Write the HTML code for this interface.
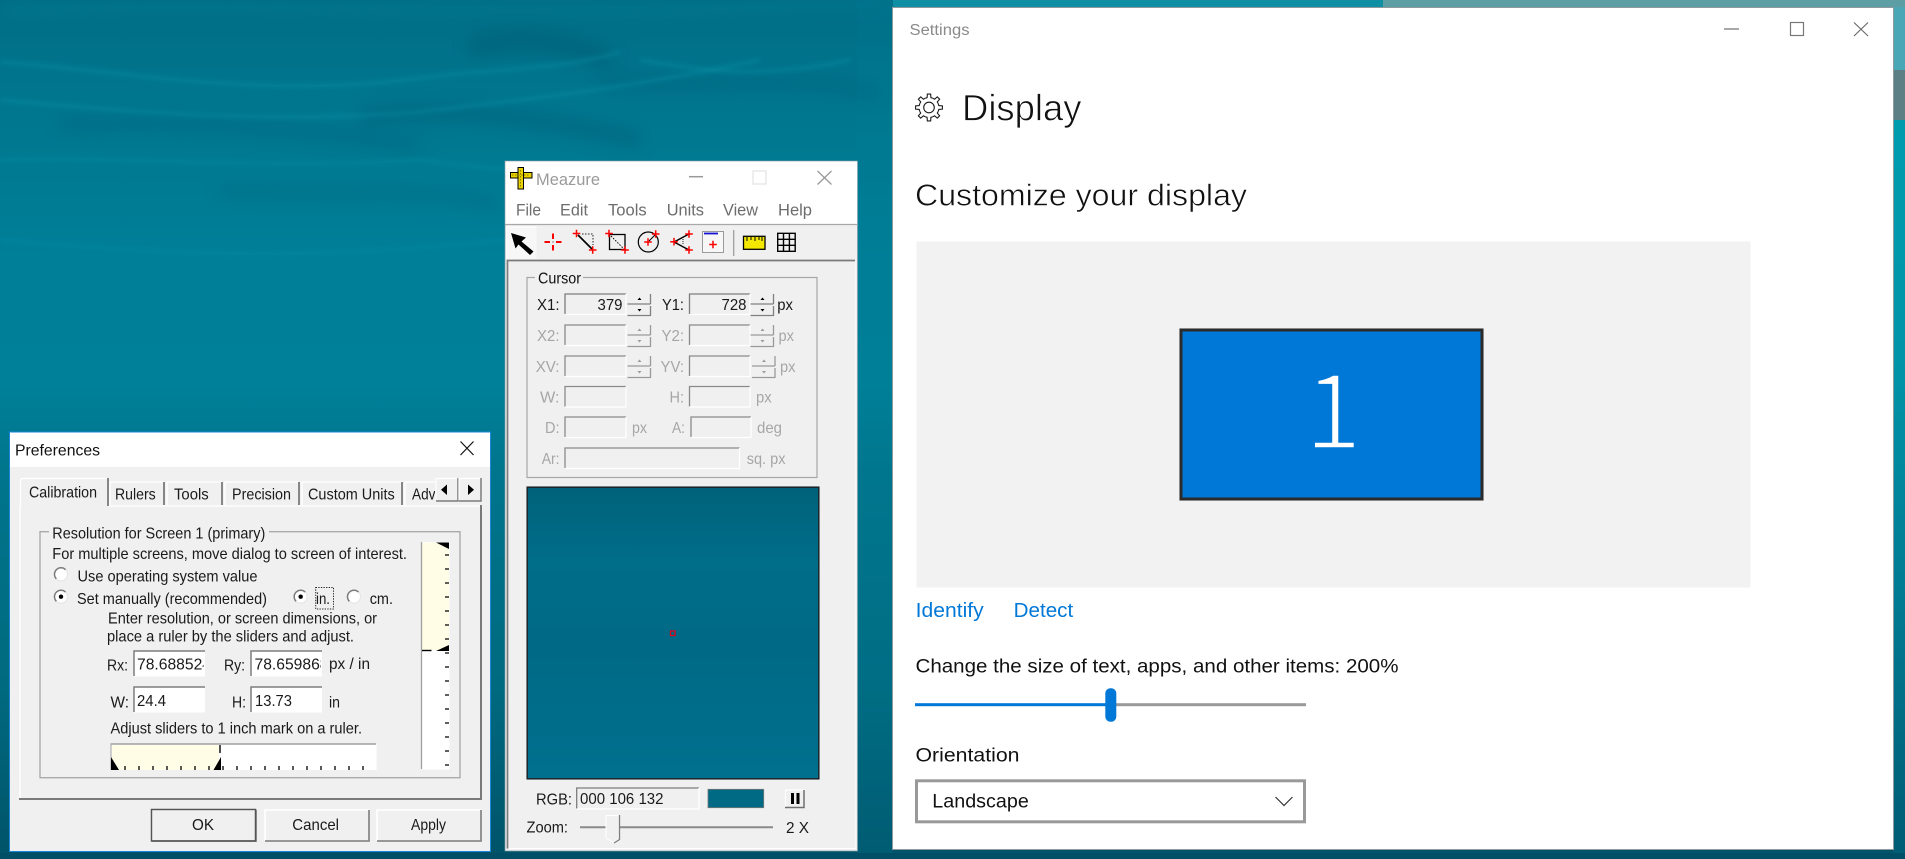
<!DOCTYPE html>
<html><head><meta charset="utf-8"><title>Display</title>
<style>
html,body{margin:0;padding:0;width:1905px;height:859px;overflow:hidden;background:#007a92}
svg{display:block;position:absolute;left:0;top:0}
text{font-family:"Liberation Sans",sans-serif;white-space:pre}
.d text{font-size:16px;fill:#1a1a1a}
.g text{font-size:16px;fill:#a6a6a6}
.m text{font-size:16.500px;fill:#6d6d6d}
.win{filter:blur(.35px)}
.set{filter:blur(.25px)}
</style></head><body>
<svg width="1905" height="859" viewBox="0 0 1905 859" xmlns="http://www.w3.org/2000/svg">
<defs>
<linearGradient id="bg" x1="0" y1="0" x2="0" y2="1">
<stop offset="0" stop-color="#006d85"/><stop offset=".1" stop-color="#00758d"/><stop offset=".3" stop-color="#007f98"/><stop offset=".45" stop-color="#008099"/><stop offset=".55" stop-color="#00758c"/><stop offset=".8" stop-color="#006a80"/><stop offset="1" stop-color="#005369"/>
</linearGradient>
<linearGradient id="rs" x1="0" y1="0" x2="0" y2="1">
<stop offset="0" stop-color="#00a0b2"/><stop offset=".42" stop-color="#0094a8"/><stop offset=".7" stop-color="#007a92"/><stop offset="1" stop-color="#005c74"/>
</linearGradient>
<linearGradient id="prev" x1="0" y1="0" x2="0" y2="1">
<stop offset="0" stop-color="#00627a"/><stop offset=".25" stop-color="#006d89"/><stop offset=".55" stop-color="#006a86"/><stop offset="1" stop-color="#00708e"/>
</linearGradient>
<filter id="b6" filterUnits="userSpaceOnUse" x="0" y="0" width="1905" height="859"><feGaussianBlur stdDeviation="8"/></filter>
<filter id="b2" filterUnits="userSpaceOnUse" x="0" y="0" width="1905" height="859"><feGaussianBlur stdDeviation="2.500"/></filter>
<clipPath id="c1"><rect x="135" y="652" width="68.500" height="24"/></clipPath>
<clipPath id="c2"><rect x="252" y="652" width="69" height="24"/></clipPath>
<g id="p"><path d="M-3.800 0H3.800M0-3.800V3.800" stroke="#f00" stroke-width="1.500" fill="none"/></g>
<g id="spin"><rect x="0" y="0" width="23" height="11" fill="#f0f0f0"/><rect x="0" y="12" width="23" height="11" fill="#f0f0f0"/>
<path d="M0 11H23M23 1V11M0 22.500H23M23 13V23" stroke="#808080" stroke-width="1.300" fill="none"/>
<path d="M10 7L12 4.500L14 7zM10 16L12 18.500L14 16z" fill="#000"/></g>
<g id="spinG"><rect x="0" y="0" width="23" height="11" fill="#f0f0f0"/><rect x="0" y="12" width="23" height="11" fill="#f0f0f0"/>
<path d="M0 11H23M23 1V11M0 22.500H23M23 13V23" stroke="#9a9a9a" stroke-width="1.300" fill="none"/>
<path d="M10 7L12 4.500L14 7zM10 16L12 18.500L14 16z" fill="#9a9a9a"/></g>
<g id="radio"><circle r="6.500" fill="#fff"/><path d="M-4.600 4.600A6.500 6.500 0 0 1 4.600-4.600" stroke="#7a7a7a" stroke-width="1.500" fill="none"/><path d="M4.600-4.600A6.500 6.500 0 0 1-4.600 4.600" stroke="#e6e6e6" stroke-width="1.200" fill="none"/></g>
<path id="tooth" d="M-3.830-9.240L-1.910-9.820L-1.650-13.400H1.650L1.910-9.820L3.830-9.240" fill="none" stroke="#1a1a1a" stroke-width="1.100"/>
<g id="btn"><rect width="104" height="31" fill="#f0f0f0"/><path d="M0 31V0H104" stroke="#fff" stroke-width="1.500" fill="none"/><path d="M104 0V31H0" stroke="#8a8a8a" stroke-width="1.800" fill="none"/></g>
</defs>

<!-- wallpaper -->
<rect width="1905" height="859" fill="url(#bg)"/>
<g fill="none">
<path d="M470 48C520 34 570 42 610 60" stroke="#005f76" stroke-width="20" filter="url(#b6)" opacity=".6"/>
<path d="M360 118C450 104 560 122 640 140" stroke="#005f76" stroke-width="16" filter="url(#b6)" opacity=".5"/>
<path d="M60 125C200 118 300 130 420 145" stroke="#00617a" stroke-width="12" filter="url(#b6)" opacity=".45"/>
<path d="M220 190C330 198 430 186 500 205" stroke="#00617a" stroke-width="10" filter="url(#b6)" opacity=".4"/>
<path d="M600 80C700 90 800 70 880 95" stroke="#00617a" stroke-width="16" filter="url(#b6)" opacity=".4"/>
<path d="M0 62C120 70 260 100 420 78C500 68 560 70 620 52" stroke="#0a9fb4" stroke-width="4" filter="url(#b2)" opacity=".3"/>
<path d="M0 100C120 110 260 125 420 112C520 100 620 90 760 60" stroke="#0a9fb4" stroke-width="4" filter="url(#b2)" opacity=".3"/>
<path d="M0 160C100 155 280 170 420 160C500 170 600 180 700 170" stroke="#0a9fb4" stroke-width="4" filter="url(#b2)" opacity=".25"/>
<path d="M640 60C700 70 760 80 850 60" stroke="#0a9fb4" stroke-width="4" filter="url(#b2)" opacity=".3"/>
<path d="M0 240C120 250 280 265 505 240" stroke="#0a9fb4" stroke-width="4" filter="url(#b2)" opacity=".18"/>
<path d="M0 10C300 0 500 20 893 2" stroke="#0a93a8" stroke-width="8" filter="url(#b6)" opacity=".3"/>
</g>
<rect x="857" y="0" width="36" height="859" fill="#007f96" opacity=".2"/>
<rect x="1893" y="0" width="12" height="859" fill="url(#rs)"/>
<rect x="1893" y="0" width="12" height="70" fill="#4aa8b6"/>
<rect x="1893" y="70" width="12" height="50" fill="#5c7f86"/>
<rect x="893" y="0" width="490" height="7" fill="#0f8fa3"/>
<rect x="1383" y="0" width="522" height="7" fill="#5d9ea5"/>
<rect x="0" y="853" width="1905" height="6" fill="#004f66"/>

<!-- SETTINGS -->
<g class="set">
<rect x="892.500" y="7.500" width="1001" height="842" fill="#fff" stroke="#8d9a9e" stroke-width="1"/>
<text x="909.500" y="35" font-size="15.500" fill="#8a8a8a" textLength="60" lengthAdjust="spacingAndGlyphs">Settings</text>
<path d="M1724 29H1739" stroke="#8a8a8a" stroke-width="1.500"/>
<rect x="1790.500" y="22.500" width="13" height="13" fill="none" stroke="#777" stroke-width="1.200"/>
<path d="M1854 22.500L1868 36M1868 22.500L1854 36" stroke="#666" stroke-width="1.100"/>
<g transform="translate(929 107.500)">
<use href="#tooth"/><use href="#tooth" transform="rotate(45)"/><use href="#tooth" transform="rotate(90)"/><use href="#tooth" transform="rotate(135)"/><use href="#tooth" transform="rotate(180)"/><use href="#tooth" transform="rotate(225)"/><use href="#tooth" transform="rotate(270)"/><use href="#tooth" transform="rotate(315)"/>
<circle r="5.300" fill="none" stroke="#1a1a1a" stroke-width="1.100"/>
</g>
<text x="962" y="120.500" font-size="37" fill="#111" stroke="#fff" stroke-width=".7" textLength="119.500" lengthAdjust="spacingAndGlyphs">Display</text>
<text x="915" y="205.700" font-size="31" fill="#111" stroke="#fff" stroke-width=".55" textLength="332" lengthAdjust="spacingAndGlyphs">Customize your display</text>
<rect x="916.500" y="241.500" width="834" height="346" fill="#f2f2f2"/>
<rect x="1179" y="328" width="305" height="173" fill="#e6e6e6"/>
<rect x="1181" y="330" width="301" height="169" fill="#0078d7" stroke="#2b2b2b" stroke-width="3"/>
<text x="1304" y="449" font-size="105" fill="#fff" stroke="#0078d7" stroke-width="3.500" style="font-family:'Noto Sans CJK JP','Liberation Sans',sans-serif">1</text>
<text x="915.700" y="617" font-size="20" fill="#0078d7" textLength="68" lengthAdjust="spacingAndGlyphs">Identify</text>
<text x="1013.700" y="617" font-size="20" fill="#0078d7" textLength="59.500" lengthAdjust="spacingAndGlyphs">Detect</text>
<text x="915.500" y="672.700" font-size="19.500" fill="#111" textLength="483" lengthAdjust="spacingAndGlyphs">Change the size of text, apps, and other items: 200%</text>
<rect x="1110" y="703.200" width="196" height="3" fill="#999"/>
<rect x="915" y="703.200" width="195" height="3" fill="#0078d7"/>
<rect x="1105.300" y="688.300" width="11" height="33.400" rx="5" fill="#0078d7"/>
<text x="915.500" y="761.700" font-size="19.500" fill="#111" textLength="104" lengthAdjust="spacingAndGlyphs">Orientation</text>
<rect x="916.500" y="780.800" width="388" height="41" fill="#fff" stroke="#999" stroke-width="3"/>
<text x="932.300" y="807.700" font-size="19.500" fill="#111" textLength="96.500" lengthAdjust="spacingAndGlyphs">Landscape</text>
<path d="M1275.500 797L1284 805.500L1292.500 797" fill="none" stroke="#333" stroke-width="1.200"/>
</g>

<g class="win">
<!-- MEAZURE -->
<rect x="505" y="161" width="352.500" height="690" fill="#f0f0f0" stroke="#7f9aa3" stroke-width=".7"/>
<rect x="505.400" y="161.400" width="351.700" height="62.600" fill="#fff"/>
<path d="M505 224.500H857" stroke="#a8a8a8" stroke-width="1.200"/>
<!-- app icon -->
<g stroke="#000" stroke-width="1" fill="#e8d200">
<rect x="510.500" y="172.500" width="21.500" height="5.500"/>
<rect x="518" y="167.500" width="5.500" height="21.500"/>
</g>
<path d="M512 175H530M520.500 170V187" stroke="#8a7a00" stroke-width="1" stroke-dasharray="1.500 1.500"/>
<text x="536" y="185" font-size="16.500" fill="#9a9a9a" textLength="64" lengthAdjust="spacingAndGlyphs">Meazure</text>
<path d="M689 176.700H703" stroke="#999" stroke-width="1.500"/>
<rect x="753" y="171" width="13" height="13" fill="none" stroke="#e4e4e4" stroke-width="1.300"/>
<path d="M817.500 171L831.500 184.500M831.500 171L817.500 184.500" stroke="#9a9a9a" stroke-width="1.300"/>
<g class="m">
<text x="516" y="215.700" textLength="25" lengthAdjust="spacingAndGlyphs">File</text>
<text x="560" y="215.700" textLength="28" lengthAdjust="spacingAndGlyphs">Edit</text>
<text x="608" y="215.700" textLength="38.700" lengthAdjust="spacingAndGlyphs">Tools</text>
<text x="666.700" y="215.700" textLength="37.300" lengthAdjust="spacingAndGlyphs">Units</text>
<text x="723" y="215.700" textLength="35" lengthAdjust="spacingAndGlyphs">View</text>
<text x="778" y="215.700" textLength="34" lengthAdjust="spacingAndGlyphs">Help</text>
</g>
<!-- toolbar -->
<rect x="506.500" y="227" width="30" height="32" fill="#f7f7f7"/>
<path d="M506.500 259V227H536.500" stroke="#fff" fill="none"/>
<path d="M511 233L526 237.500L521.500 241.500L533.500 251.500L530 255L518.500 244.500L515.500 248.500z" fill="#000"/>
<path d="M544.500 242H550M556 242H561.500M553 233.500V239M553 245V250.500" stroke="#f00" stroke-width="2" fill="none"/>
<path d="M552 241h2v2h-2z" fill="#bbb"/>
<path d="M578 235L592 249" stroke="#000" stroke-width="1.700"/>
<path d="M582 234H593V245" stroke="#222" stroke-width="1" stroke-dasharray="1.500 1.500" fill="none"/>
<use href="#p" x="576.500" y="233.500"/><use href="#p" x="592.700" y="250"/>
<rect x="609.500" y="234.500" width="15.500" height="15" fill="none" stroke="#000" stroke-width="1.300"/>
<path d="M611 236L624 249" stroke="#000" stroke-width="1" stroke-dasharray="1.500 1.500"/>
<use href="#p" x="609" y="233.500"/><use href="#p" x="625" y="250"/>
<circle cx="648.300" cy="242" r="10" fill="none" stroke="#000" stroke-width="1.200"/>
<path d="M649 241L655 235" stroke="#000" stroke-width="1"/>
<use href="#p" x="648" y="242"/><use href="#p" x="655.700" y="234"/>
<path d="M689 234L674 242L689 250" fill="none" stroke="#000" stroke-width="1.400"/>
<path d="M683 239V245" stroke="#222" stroke-width="1" stroke-dasharray="1 1"/>
<use href="#p" x="674" y="241.700"/><use href="#p" x="689" y="234"/><use href="#p" x="689" y="250"/>
<rect x="702.500" y="231.500" width="21" height="21" fill="#f7f7f7" stroke="#9a9a9a" stroke-width="1"/>
<path d="M704 233.500H718" stroke="#1414d0" stroke-width="1.800"/>
<use href="#p" x="713" y="244.500"/>
<path d="M733.700 230V256" stroke="#999" stroke-width="1.200"/>
<rect x="743.500" y="236.300" width="21.500" height="13" fill="#f5e800" stroke="#000" stroke-width="1.300"/>
<path d="M747 237V241M751 237V240M755 237V241M759 237V240M762 237V241" stroke="#000" stroke-width="1"/>
<path d="M777.700 233.300H795.200V251.300H777.700zM783.500 233.300V251.300M789.400 233.300V251.300M777.700 239.300H795.200M777.700 245.300H795.200" fill="none" stroke="#000" stroke-width="1.400"/>
<!-- panel -->
<path d="M507.500 848.500V260.500H855" fill="none" stroke="#7b7b7b" stroke-width="1.700"/>
<path d="M509 848.500H855V262" fill="none" stroke="#fff" stroke-width="1"/>
<rect x="509" y="262" width="346" height="586" fill="#f0f0f0"/>
<!-- cursor group -->
<rect x="527" y="277.500" width="290" height="200" fill="none" stroke="#a6a6a6" stroke-width="1.200"/>
<rect x="535" y="270" width="48" height="14" fill="#f0f0f0"/>
<text x="538" y="283.500" font-size="16" fill="#111" textLength="43" lengthAdjust="spacingAndGlyphs">Cursor</text>
<g fill="#f0f0f0" stroke="none">
<path d="M565 314V294H626" fill="none" stroke="#7d7d7d" stroke-width="1.300"/><path d="M626 294V314.500H565" fill="none" stroke="#fff" stroke-width="1.200"/>
<path d="M689.500 314V294H750" fill="none" stroke="#7d7d7d" stroke-width="1.300"/><path d="M750 294V314.500H689.500" fill="none" stroke="#fff" stroke-width="1.200"/>
<path d="M565 345V325H626" fill="none" stroke="#8a8a8a" stroke-width="1.300"/><path d="M626 325V345.500H565" fill="none" stroke="#fff" stroke-width="1.200"/>
<path d="M689.500 345V325H750" fill="none" stroke="#8a8a8a" stroke-width="1.300"/><path d="M750 325V345.500H689.500" fill="none" stroke="#fff" stroke-width="1.200"/>
<path d="M565 376V356H626" fill="none" stroke="#8a8a8a" stroke-width="1.300"/><path d="M626 356V376.500H565" fill="none" stroke="#fff" stroke-width="1.200"/>
<path d="M689.500 376V356H750" fill="none" stroke="#8a8a8a" stroke-width="1.300"/><path d="M750 356V376.500H689.500" fill="none" stroke="#fff" stroke-width="1.200"/>
<path d="M565 406.500V386.500H626" fill="none" stroke="#8a8a8a" stroke-width="1.300"/><path d="M626 386.500V407H565" fill="none" stroke="#fff" stroke-width="1.200"/>
<path d="M689.500 406.500V386.500H750" fill="none" stroke="#8a8a8a" stroke-width="1.300"/><path d="M750 386.500V407H689.500" fill="none" stroke="#fff" stroke-width="1.200"/>
<path d="M565 437V417H626" fill="none" stroke="#8a8a8a" stroke-width="1.300"/><path d="M626 417V437.500H565" fill="none" stroke="#fff" stroke-width="1.200"/>
<path d="M691 437V417H751" fill="none" stroke="#8a8a8a" stroke-width="1.300"/><path d="M751 417V437.500H691" fill="none" stroke="#fff" stroke-width="1.200"/>
<path d="M565 468V448H739.500" fill="none" stroke="#8a8a8a" stroke-width="1.300"/><path d="M739.500 448V468.500H565" fill="none" stroke="#fff" stroke-width="1.200"/>
</g>
<use href="#spin" x="627.500" y="293"/><use href="#spin" x="750.500" y="293"/>
<use href="#spinG" x="627.500" y="324"/><use href="#spinG" x="750.500" y="324"/>
<use href="#spinG" x="627.500" y="355"/><use href="#spinG" x="752" y="355"/>
<g class="d">
<text x="537" y="310" textLength="22.500" lengthAdjust="spacingAndGlyphs">X1:</text>
<text x="597.500" y="310" textLength="25" lengthAdjust="spacingAndGlyphs">379</text>
<text x="662" y="310" textLength="22" lengthAdjust="spacingAndGlyphs">Y1:</text>
<text x="721.500" y="310" textLength="25" lengthAdjust="spacingAndGlyphs">728</text>
<text x="777.300" y="310" textLength="15.700" lengthAdjust="spacingAndGlyphs">px</text>
</g>
<g class="g">
<text x="537" y="341" textLength="22.500" lengthAdjust="spacingAndGlyphs">X2:</text>
<text x="661.500" y="341" textLength="22.500" lengthAdjust="spacingAndGlyphs">Y2:</text>
<text x="778.500" y="341" textLength="15.500" lengthAdjust="spacingAndGlyphs">px</text>
<text x="535.700" y="372" textLength="23.800" lengthAdjust="spacingAndGlyphs">XV:</text>
<text x="660.500" y="372" textLength="23.500" lengthAdjust="spacingAndGlyphs">YV:</text>
<text x="780" y="372" textLength="15.500" lengthAdjust="spacingAndGlyphs">px</text>
<text x="540" y="402.500" textLength="19.500" lengthAdjust="spacingAndGlyphs">W:</text>
<text x="669.500" y="402.500" textLength="14.500" lengthAdjust="spacingAndGlyphs">H:</text>
<text x="756" y="402.500" textLength="15.700" lengthAdjust="spacingAndGlyphs">px</text>
<text x="545" y="433" textLength="14.500" lengthAdjust="spacingAndGlyphs">D:</text>
<text x="632" y="433" textLength="15" lengthAdjust="spacingAndGlyphs">px</text>
<text x="672" y="433" textLength="13" lengthAdjust="spacingAndGlyphs">A:</text>
<text x="757" y="433" textLength="25" lengthAdjust="spacingAndGlyphs">deg</text>
<text x="541.700" y="464" textLength="17.800" lengthAdjust="spacingAndGlyphs">Ar:</text>
<text x="746.700" y="464" textLength="38.800" lengthAdjust="spacingAndGlyphs">sq. px</text>
</g>
<!-- preview -->
<rect x="527.200" y="487.200" width="291.600" height="291.600" fill="url(#prev)" stroke="#1c2428" stroke-width="1.500"/>
<rect x="670.500" y="631" width="4.500" height="4.500" fill="#006a84" stroke="#e0001c" stroke-width="1.300"/>
<g class="d">
<text x="536" y="804.300" textLength="36" lengthAdjust="spacingAndGlyphs">RGB:</text>
<text x="580" y="804" textLength="83.500" lengthAdjust="spacingAndGlyphs">000 106 132</text>
<text x="526.500" y="832.700" textLength="41.500" lengthAdjust="spacingAndGlyphs">Zoom:</text>
<text x="786" y="833" textLength="23" lengthAdjust="spacingAndGlyphs">2 X</text>
</g>
<path d="M576.700 808.500V788H699" fill="none" stroke="#7d7d7d" stroke-width="1.300"/>
<path d="M699 788V809H576.700" fill="none" stroke="#fff" stroke-width="1.300"/>
<rect x="708" y="789.300" width="55.700" height="18.400" fill="#006a84" stroke="#777" stroke-width=".8"/>
<path d="M785.500 807V790H804" fill="none" stroke="#fff" stroke-width="1.200"/>
<path d="M804 790V807.500H785" fill="none" stroke="#707070" stroke-width="1.500"/>
<rect x="791" y="793" width="3" height="11" fill="#000"/><rect x="796.500" y="793" width="3" height="11" fill="#000"/>
<path d="M580 827.300H773" stroke="#8a8a8a" stroke-width="2"/>
<path d="M606 815.500H619V839L613.500 842.500L606 838z" fill="#f0f0f0" stroke="#fff" stroke-width="1"/>
<path d="M619.500 815V839.500L614 843" fill="none" stroke="#7d7d7d" stroke-width="1.300"/>

<!-- PREFERENCES -->
<rect x="9.500" y="432" width="481" height="419.500" fill="#f0f0f0" stroke="#1a86d8" stroke-width="1"/>
<rect x="10" y="432.500" width="480" height="34.500" fill="#fff"/>
<text x="15" y="455.700" font-size="16" fill="#111" textLength="85" lengthAdjust="spacingAndGlyphs">Preferences</text>
<path d="M460.500 441.500L473.500 455M473.500 441.500L460.500 455" stroke="#111" stroke-width="1.200"/>
<!-- page -->
<path d="M20 799V506H481" fill="none" stroke="#fff" stroke-width="1.300"/>
<path d="M481 505V799H19" fill="none" stroke="#7a7a7a" stroke-width="2"/>
<!-- tabs -->
<path d="M110 505V482H164" fill="none" stroke="#fff" stroke-width="1.300"/><path d="M164 482V505" stroke="#7a7a7a" stroke-width="1.800"/>
<path d="M167 505V482H222" fill="none" stroke="#fff" stroke-width="1.300"/><path d="M222 482V505" stroke="#7a7a7a" stroke-width="1.800"/>
<path d="M225 505V482H299" fill="none" stroke="#fff" stroke-width="1.300"/><path d="M299 482V505" stroke="#7a7a7a" stroke-width="1.800"/>
<path d="M302 505V482H402" fill="none" stroke="#fff" stroke-width="1.300"/><path d="M402 482V505" stroke="#7a7a7a" stroke-width="1.800"/>
<path d="M405 505V482H436" fill="none" stroke="#fff" stroke-width="1.300"/>
<rect x="20" y="478" width="88" height="30" fill="#f0f0f0"/>
<path d="M20.500 507V480L22 478.500H107" fill="none" stroke="#fff" stroke-width="1.300"/>
<path d="M108 478V506" stroke="#7a7a7a" stroke-width="1.800"/>
<g class="d">
<text x="29" y="497.300" textLength="68" lengthAdjust="spacingAndGlyphs">Calibration</text>
<text x="115" y="499.300" textLength="40.700" lengthAdjust="spacingAndGlyphs">Rulers</text>
<text x="174" y="499.300" textLength="34.700" lengthAdjust="spacingAndGlyphs">Tools</text>
<text x="232" y="499.300" textLength="59" lengthAdjust="spacingAndGlyphs">Precision</text>
<text x="308" y="499.300" textLength="86.700" lengthAdjust="spacingAndGlyphs">Custom Units</text>
<text x="412" y="499.300" textLength="31" lengthAdjust="spacingAndGlyphs">Adva</text>
</g>
<rect x="435" y="477" width="47" height="25" fill="#f0f0f0"/>
<path d="M436 500V478.500H458" fill="none" stroke="#fff" stroke-width="1.200"/>
<path d="M458 478V501H436" fill="none" stroke="#7a7a7a" stroke-width="1.500"/>
<path d="M459 500V478.500H481" fill="none" stroke="#fff" stroke-width="1.200"/>
<path d="M481 478V501H459" fill="none" stroke="#7a7a7a" stroke-width="1.500"/>
<path d="M447 484.500V495L441 489.700z" fill="#000"/><path d="M468 484.500V495L474 489.700z" fill="#000"/>
<!-- group -->
<rect x="40" y="531.700" width="420" height="246" fill="none" stroke="#a6a6a6" stroke-width="1.300"/>
<rect x="49" y="525" width="220" height="14" fill="#f0f0f0"/>
<g class="d">
<text x="52.300" y="538.300" textLength="213" lengthAdjust="spacingAndGlyphs">Resolution for Screen 1 (primary)</text>
<text x="52.300" y="559" textLength="354.700" lengthAdjust="spacingAndGlyphs">For multiple screens, move dialog to screen of interest.</text>
<text x="77.500" y="581.300" textLength="180" lengthAdjust="spacingAndGlyphs">Use operating system value</text>
<text x="77" y="604" textLength="190" lengthAdjust="spacingAndGlyphs">Set manually (recommended)</text>
<text x="316" y="604" textLength="14" lengthAdjust="spacingAndGlyphs">in.</text>
<text x="369.700" y="604" textLength="23.300" lengthAdjust="spacingAndGlyphs">cm.</text>
<text x="108" y="623.300" textLength="269" lengthAdjust="spacingAndGlyphs">Enter resolution, or screen dimensions, or</text>
<text x="107" y="641.700" textLength="247" lengthAdjust="spacingAndGlyphs">place a ruler by the sliders and adjust.</text>
<text x="107" y="670.700" textLength="21" lengthAdjust="spacingAndGlyphs">Rx:</text>
<text x="224" y="670.700" textLength="21" lengthAdjust="spacingAndGlyphs">Ry:</text>
<text x="329" y="669" textLength="41" lengthAdjust="spacingAndGlyphs">px / in</text>
<text x="110.500" y="707.300" textLength="18.500" lengthAdjust="spacingAndGlyphs">W:</text>
<text x="232" y="707.300" textLength="14" lengthAdjust="spacingAndGlyphs">H:</text>
<text x="329" y="707.300" textLength="11" lengthAdjust="spacingAndGlyphs">in</text>
<text x="110.500" y="733.300" textLength="251.500" lengthAdjust="spacingAndGlyphs">Adjust sliders to 1 inch mark on a ruler.</text>
</g>
<use href="#radio" x="61" y="574.300"/><use href="#radio" x="61" y="596.700"/><use href="#radio" x="300.700" y="596.700"/><use href="#radio" x="354" y="596.700"/>
<circle cx="61" cy="596.700" r="2.200" fill="#000"/><circle cx="300.700" cy="596.700" r="2.200" fill="#000"/>
<rect x="315.700" y="587.500" width="17.800" height="21.500" fill="none" stroke="#222" stroke-width="1" stroke-dasharray="1.300 1.300"/>
<!-- edit fields -->
<g>
<rect x="134" y="651" width="71" height="25.500" fill="#fff"/><path d="M134 676V651H205" fill="none" stroke="#7d7d7d" stroke-width="1.500"/>
<rect x="251" y="651" width="71" height="25.500" fill="#fff"/><path d="M251 676V651H322" fill="none" stroke="#7d7d7d" stroke-width="1.500"/>
<rect x="134" y="687" width="71" height="25.500" fill="#fff"/><path d="M134 712V687H205" fill="none" stroke="#7d7d7d" stroke-width="1.500"/>
<rect x="251" y="687" width="71" height="25.500" fill="#fff"/><path d="M251 712V687H322" fill="none" stroke="#7d7d7d" stroke-width="1.500"/>
</g>
<g class="d">
<g clip-path="url(#c1)"><text x="137" y="669.300" textLength="74" lengthAdjust="spacingAndGlyphs">78.688524</text></g>
<g clip-path="url(#c2)"><text x="254.500" y="669.300" textLength="74" lengthAdjust="spacingAndGlyphs">78.659868</text></g>
<text x="137" y="706" textLength="29" lengthAdjust="spacingAndGlyphs">24.4</text>
<text x="255" y="706" textLength="37" lengthAdjust="spacingAndGlyphs">13.73</text>
</g>
<!-- h ruler -->
<rect x="110.500" y="743.500" width="266" height="26.500" fill="#fff"/>
<path d="M112 770V747Q112 745 114 745H219V770z" fill="#fffde6"/>
<path d="M110.500 744H376" stroke="#a0a0a0" stroke-width="1.500"/>
<path d="M111 744V770" stroke="#a0a0a0" stroke-width="1"/>
<path d="M125 766V770M139 766V770M153 766V770M167 766V770M181 766V770M195 766V770M209 766V770M223 766V770M237 766V770M251 766V770M265 766V770M279 766V770M293 766V770M307 766V770M321 766V770M335 766V770M349 766V770M363 766V770" stroke="#000" stroke-width="1.300"/>
<path d="M111 757L119 770H111zM221 757V770H213.500z" fill="#000"/>
<path d="M220 745V753" stroke="#000" stroke-width="1.400"/>
<!-- v ruler -->
<rect x="421.500" y="542" width="28" height="227.500" fill="#fff"/>
<path d="M422 650V545Q422 542.500 425 542.500H449V650z" fill="#fffde6"/>
<path d="M421.500 542V769" stroke="#a0a0a0" stroke-width="1.300"/>
<path d="M445 555H449M445 569H449M445 583H449M445 597H449M445 611H449M445 625H449M445 639H449M445 653H449M445 667H449M445 681H449M445 695H449M445 709H449M445 723H449M445 737H449M445 751H449M445 765H449" stroke="#000" stroke-width="1.300"/>
<path d="M436 542.500H449V549zM436 651H449V645z" fill="#000"/>
<path d="M422 650.500H431.500" stroke="#000" stroke-width="1.400"/>
<!-- buttons -->
<use href="#btn" x="152" y="810"/><use href="#btn" x="265" y="810"/><use href="#btn" x="377" y="810"/>
<rect x="151.500" y="809.500" width="104" height="31.500" fill="none" stroke="#555" stroke-width="1.500"/>
<g class="d">
<text x="192" y="830" textLength="22" lengthAdjust="spacingAndGlyphs">OK</text>
<text x="292.300" y="830" textLength="46.700" lengthAdjust="spacingAndGlyphs">Cancel</text>
<text x="411" y="830" textLength="35" lengthAdjust="spacingAndGlyphs">Apply</text>
</g>
</g>
</svg>
</body></html>
